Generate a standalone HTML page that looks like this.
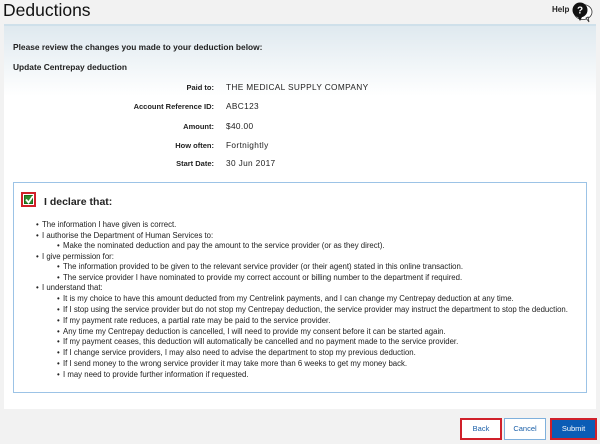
<!DOCTYPE html>
<html><head><meta charset="utf-8"><style>
*{margin:0;padding:0;box-sizing:border-box}
body{width:600px;height:444px;background:#f2f2f2;font-family:"Liberation Sans",sans-serif;color:#222;position:relative;overflow:hidden}
.abs{position:absolute}
h1{position:absolute;left:3px;top:0px;font-size:17.5px;font-weight:normal;color:#111}
.panel{position:absolute;left:4px;top:24px;width:592px;height:385px;background:linear-gradient(#dfe9ef 0px,#fff 70px);border-top:2px solid #cfe0ea}
.t{position:absolute;font-size:8.4px;white-space:nowrap}
.lab{position:absolute;right:386px;font-size:7.5px;font-weight:bold;white-space:nowrap;text-align:right}
.val{position:absolute;left:226px;font-size:8.3px;letter-spacing:.35px;white-space:nowrap}
.decl{position:absolute;left:13px;top:182px;width:574px;height:211px;border:1px solid #9cc3e6;background:#fff}
.li{position:absolute;font-size:7.8px;white-space:nowrap;line-height:10px}
.li:before{content:"•";position:absolute;left:-6px}
.btn{position:absolute;top:418px;height:22px;font-size:7.5px;text-align:center;line-height:18px}
</style></head><body>
<h1>Deductions</h1>
<div class="t" style="left:552px;top:5px;font-size:8px;font-weight:bold">Help</div>
<svg class="abs" style="left:570px;top:1px" width="24" height="22" viewBox="0 0 24 22"><ellipse cx="13" cy="11" rx="9" ry="7.5" fill="#fff" stroke="#333" stroke-width="0.8"/><path d="M16 17l3 4 -1-5z" fill="#fff" stroke="#333" stroke-width=".8"/><circle cx="10" cy="9" r="7.5" fill="#111"/><path d="M8 16l2 4 2-4z" fill="#111"/><text x="10" y="12.5" font-size="10" font-weight="bold" fill="#fff" text-anchor="middle" font-family="Liberation Sans">?</text></svg>
<div class="panel"></div>
<div class="t" style="left:13px;top:42px;font-weight:bold">Please review the changes you made to your deduction below:</div>
<div class="t" style="left:13px;top:62px;font-weight:bold">Update Centrepay deduction</div>
<div class="lab" style="top:83px">Paid to:</div><div class="val" style="top:82px">THE MEDICAL SUPPLY COMPANY</div>
<div class="lab" style="top:102px">Account Reference ID:</div><div class="val" style="top:101px">ABC123</div>
<div class="lab" style="top:122px">Amount:</div><div class="val" style="top:121px">$40.00</div>
<div class="lab" style="top:141px">How often:</div><div class="val" style="top:140px">Fortnightly</div>
<div class="lab" style="top:159px">Start Date:</div><div class="val" style="top:158px">30 Jun 2017</div>
<div class="decl"></div>
<div class="abs" style="left:21px;top:192px;width:15px;height:15px;border:2px solid #d0202a;background:#fff"></div>
<div class="abs" style="left:24px;top:195px;width:9px;height:9px;background:#2e8b2e;border:1px solid #1c6a1c"></div>
<svg class="abs" style="left:24px;top:194px" width="11" height="11"><path d="M2 5.5l2.5 3L9 2" stroke="#fff" stroke-width="1.8" fill="none"/></svg>
<div class="t" style="left:44px;top:196px;font-size:10.5px;font-weight:bold">I declare that:</div>
<div class="li" style="left:42px;top:220px">The information I have given is correct.</div>
<div class="li" style="left:42px;top:231px">I authorise the Department of Human Services to:</div>
<div class="li" style="left:63px;top:241px">Make the nominated deduction and pay the amount to the service provider (or as they direct).</div>
<div class="li" style="left:42px;top:252px">I give permission for:</div>
<div class="li" style="left:63px;top:262px">The information provided to be given to the relevant service provider (or their agent) stated in this online transaction.</div>
<div class="li" style="left:63px;top:273px">The service provider I have nominated to provide my correct account or billing number to the department if required.</div>
<div class="li" style="left:42px;top:283px">I understand that:</div>
<div class="li" style="left:63px;top:294px">It is my choice to have this amount deducted from my Centrelink payments, and I can change my Centrepay deduction at any time.</div>
<div class="li" style="left:63px;top:305px">If I stop using the service provider but do not stop my Centrepay deduction, the service provider may instruct the department to stop the deduction.</div>
<div class="li" style="left:63px;top:316px">If my payment rate reduces, a partial rate may be paid to the service provider.</div>
<div class="li" style="left:63px;top:327px">Any time my Centrepay deduction is cancelled, I will need to provide my consent before it can be started again.</div>
<div class="li" style="left:63px;top:337px">If my payment ceases, this deduction will automatically be cancelled and no payment made to the service provider.</div>
<div class="li" style="left:63px;top:348px">If I change service providers, I may also need to advise the department to stop my previous deduction.</div>
<div class="li" style="left:63px;top:359px">If I send money to the wrong service provider it may take more than 6 weeks to get my money back.</div>
<div class="li" style="left:63px;top:370px">I may need to provide further information if requested.</div>
<div class="btn" style="left:460px;width:42px;background:#fff;border:2px solid #d0202a;color:#1a5fa8">Back</div>
<div class="btn" style="left:504px;width:42px;background:#fff;border:1px solid #7fb0dc;color:#1a5fa8;line-height:20px">Cancel</div>
<div class="btn" style="left:550px;width:47px;background:#0b5cb5;border:2px solid #d0202a;color:#fff">Submit</div>
</body></html>
